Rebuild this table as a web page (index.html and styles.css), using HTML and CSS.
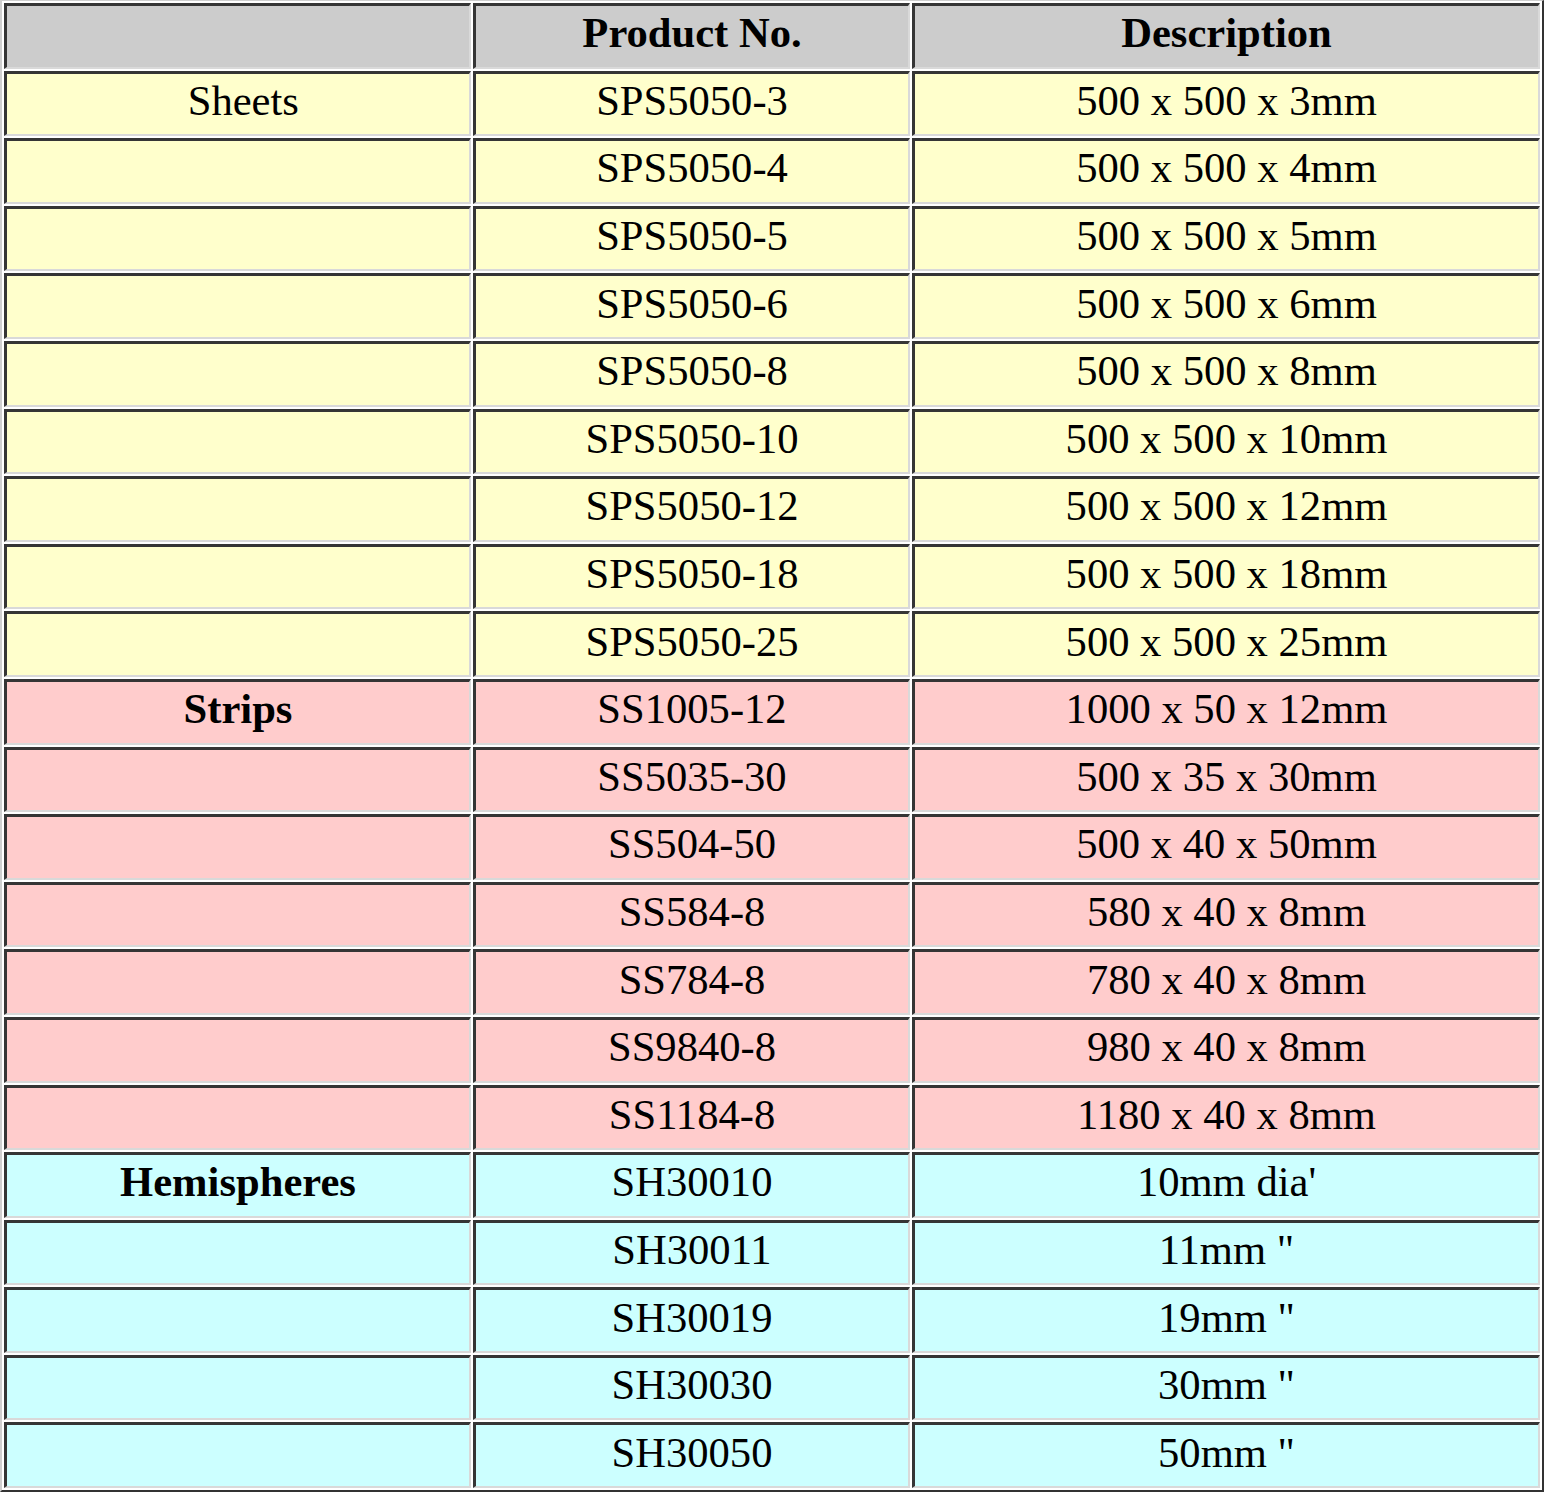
FILE: index.html
```html
<!DOCTYPE html>
<html>
<head>
<meta charset="utf-8">
<link rel="stylesheet" href="styles.css">
</head>
<body>
<table class="products">
  <colgroup>
    <col class="c1"><col class="c2"><col class="c3">
  </colgroup>
  <tr class="head"><th></th><th>Product No.</th><th>Description</th></tr>
  <tr class="sheet"><td>&nbsp;Sheets</td><td>SPS5050-3</td><td>500 x 500 x 3mm</td></tr>
  <tr class="sheet"><td></td><td>SPS5050-4</td><td>500 x 500 x 4mm</td></tr>
  <tr class="sheet"><td></td><td>SPS5050-5</td><td>500 x 500 x 5mm</td></tr>
  <tr class="sheet"><td></td><td>SPS5050-6</td><td>500 x 500 x 6mm</td></tr>
  <tr class="sheet"><td></td><td>SPS5050-8</td><td>500 x 500 x 8mm</td></tr>
  <tr class="sheet"><td></td><td>SPS5050-10</td><td>500 x 500 x 10mm</td></tr>
  <tr class="sheet"><td></td><td>SPS5050-12</td><td>500 x 500 x 12mm</td></tr>
  <tr class="sheet"><td></td><td>SPS5050-18</td><td>500 x 500 x 18mm</td></tr>
  <tr class="sheet"><td></td><td>SPS5050-25</td><td>500 x 500 x 25mm</td></tr>
  <tr class="strip"><td class="cat">Strips</td><td>SS1005-12</td><td>1000 x 50 x 12mm</td></tr>
  <tr class="strip"><td></td><td>SS5035-30</td><td>500 x 35 x 30mm</td></tr>
  <tr class="strip"><td></td><td>SS504-50</td><td>500 x 40 x 50mm</td></tr>
  <tr class="strip"><td></td><td>SS584-8</td><td>580 x 40 x 8mm</td></tr>
  <tr class="strip"><td></td><td>SS784-8</td><td>780 x 40 x 8mm</td></tr>
  <tr class="strip"><td></td><td>SS9840-8</td><td>980 x 40 x 8mm</td></tr>
  <tr class="strip"><td></td><td>SS1184-8</td><td>1180 x 40 x 8mm</td></tr>
  <tr class="hemi"><td class="cat">Hemispheres</td><td>SH30010</td><td>10mm dia'</td></tr>
  <tr class="hemi"><td></td><td>SH30011</td><td>11mm "</td></tr>
  <tr class="hemi"><td></td><td>SH30019</td><td>19mm "</td></tr>
  <tr class="hemi"><td></td><td>SH30030</td><td>30mm "</td></tr>
  <tr class="hemi"><td></td><td>SH30050</td><td>50mm "</td></tr>
</table>
</body>
</html>
```
FILE: styles.css
```css
html, body {
  margin: 0;
  padding: 0;
  background: #ffffff;
}

.products {
  border-collapse: separate;
  border-spacing: 2px;
  border-style: solid;
  border-width: 1px 2px 2px 2px;
  border-color: #cfcfcf #333333 #333333 #cfcfcf;
  table-layout: fixed;
  width: 1544px;
  font-family: "Liberation Serif", "Times New Roman", serif;
  font-size: 42.6px;
  color: #000;
}

.c1 { width: 467px; }
.c2 { width: 437px; }
.c3 { width: 628px; }

.products tr {
  height: 65.6px;
}

.products th,
.products td {
  box-sizing: border-box;
  padding: 0 0 7px 0;
  text-align: center;
  vertical-align: middle;
  border-style: solid;
  border-width: 3px 2px 2px 3px;
  border-color: #353535 #d9d9d9 #d9d9d9 #353535;
  font-weight: normal;
  white-space: nowrap;
}

.products th {
  font-weight: bold;
  background: #cccccc;
}

.products .cat {
  font-weight: bold;
}

.sheet td { background: #ffffcc; }
.strip td { background: #ffcccc; }
.hemi td { background: #ccffff; }
```
